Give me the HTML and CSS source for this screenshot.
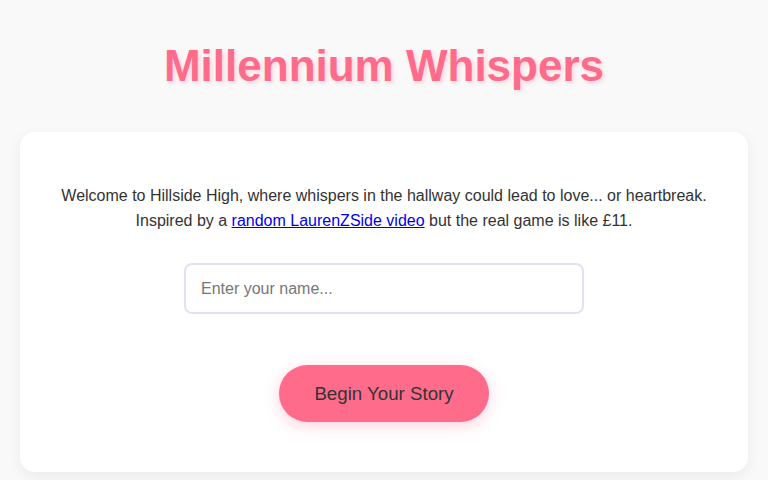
FILE: index.html
```html
<!DOCTYPE html>
<html lang="en">
<head>
<meta charset="utf-8">
<title>Millennium Whispers</title>
<link rel="stylesheet" href="styles.css">
</head>
<body>
<div class="app">
  <h1 class="title">Millennium Whispers</h1>
  <div class="card">
    <p class="intro">Welcome to Hillside High, where whispers in the hallway could lead to love... or heartbreak.<br>Inspired by a <a href="#">random LaurenZSide video</a> but the real game is like £11.</p>
    <input class="name-input" type="text" placeholder="Enter your name...">
    <button class="start-btn">Begin Your Story</button>
  </div>
</div>
</body>
</html>
```
FILE: styles.css
```css
html, body {
  margin: 0;
  padding: 0;
}
body {
  background: #f9f9f9;
  font-family: "Liberation Sans", Arial, sans-serif;
  color: #333;
}
.app {
  padding: 20px;
  display: flex;
  flex-direction: column;
  align-items: stretch;
}
.title {
  margin: 18px 0 39px;
  text-align: center;
  font-size: 44px;
  line-height: 55px;
  font-weight: bold;
  color: #ff6b8b;
  text-shadow: 2px 2px 4px rgba(255, 107, 139, 0.25);
}
.card {
  background: #fff;
  border-radius: 15px;
  box-shadow: 0 5px 15px rgba(0, 0, 0, 0.06);
  padding: 51px 30px 50px;
  display: flex;
  flex-direction: column;
  align-items: center;
  text-align: center;
}
.intro {
  margin: 0;
  font-size: 16px;
  line-height: 25px;
}
.intro a {
  color: #0000ee;
}
.name-input {
  margin-top: 30px;
  width: 400px;
  height: 51px;
  box-sizing: border-box;
  padding: 0 15px;
  border: 2px solid #e4e0f4;
  border-radius: 8px;
  font-family: inherit;
  font-size: 16px;
  color: #333;
  outline: none;
}
.name-input::placeholder {
  color: #777;
}
.start-btn {
  margin-top: 51px;
  width: 210px;
  height: 57px;
  border: none;
  border-radius: 30px;
  background: #ff6b8b;
  color: #333;
  font-family: inherit;
  font-size: 18.7px;
  box-shadow: 0 4px 15px rgba(255, 107, 139, 0.3);
  cursor: pointer;
}
```
